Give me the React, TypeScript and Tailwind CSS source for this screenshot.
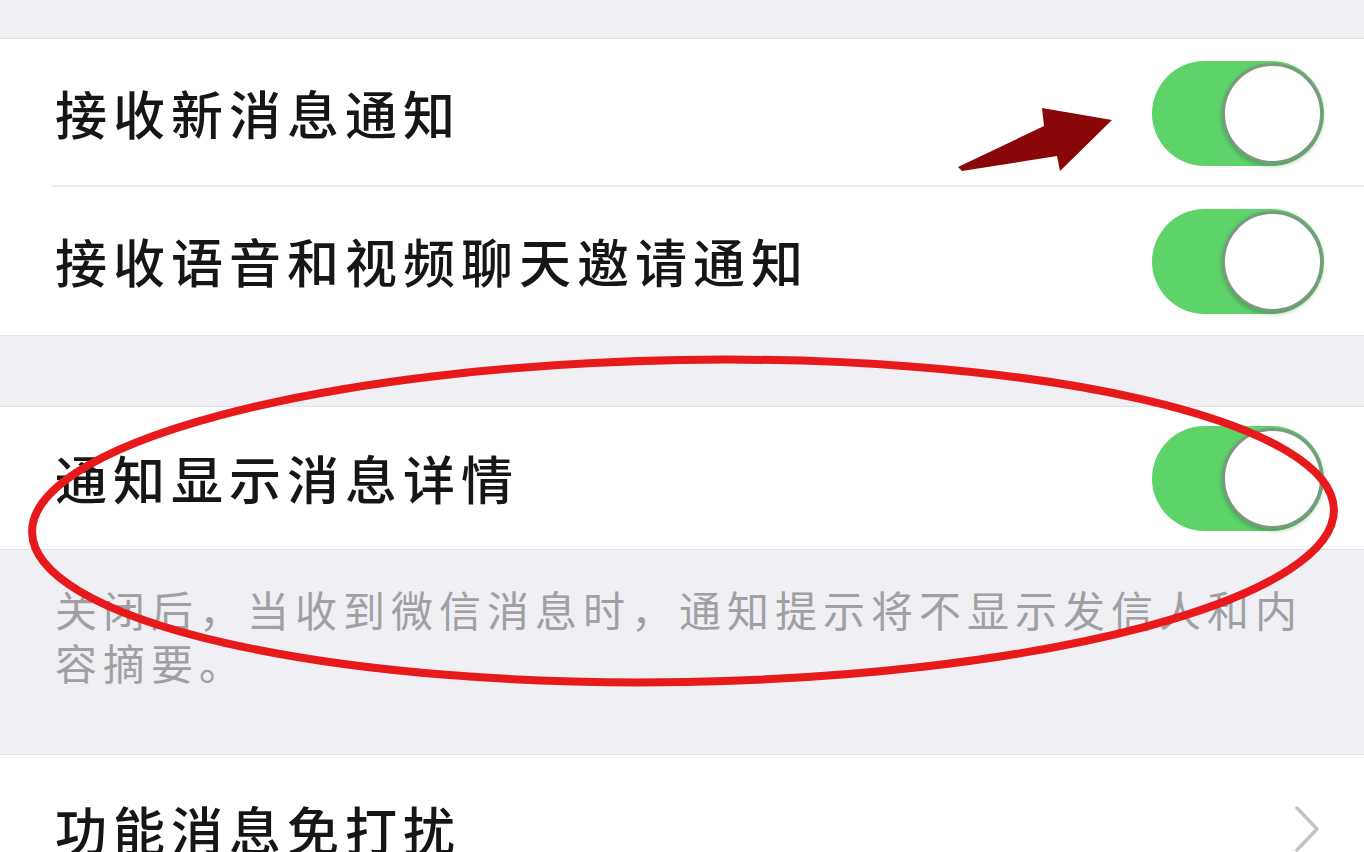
const font = { fontFamily: '"Noto Sans CJK SC", "Noto Sans", sans-serif' }

function Toggle() {
  return (
    <div className="relative h-[105px] w-[172px] shrink-0 rounded-full bg-[#5dd36a]">
      <div className="absolute right-[1px] top-[2px] h-[101px] w-[101px] rounded-full border-[3px] border-[#7a9a80] bg-white shadow-[0_2px_4px_rgba(0,0,0,0.25)]" />
    </div>
  )
}

function Chevron() {
  return (
    <svg width="30" height="48" viewBox="0 0 30 48" className="mr-[2px] shrink-0">
      <polyline points="5,3 25,24 5,45" fill="none" stroke="#c4c4c8" strokeWidth="3.5" strokeLinecap="round" strokeLinejoin="round" />
    </svg>
  )
}

function Row({ label, right, divider }: { label: string; right: React.ReactNode; divider?: boolean }) {
  return (
    <div className="relative flex h-[148px] items-center justify-between bg-white pl-[55px] pr-[40px]">
      <span className="text-[52px] font-medium leading-none tracking-[6px] text-[#161616]">{label}</span>
      {right}
      {divider && <div className="absolute bottom-0 left-[52px] right-0 h-[2px] bg-[#ececec]" />}
    </div>
  )
}

export default function App() {
  return (
    <div className="relative h-[852px] w-[1364px] overflow-hidden bg-[#efeff4]" style={font}>
      <div className="h-[38px]" />
      <div className="border-y border-[#e2e2e6]">
        <Row label="接收新消息通知" right={<Toggle />} divider />
        <Row label="接收语音和视频聊天邀请通知" right={<Toggle />} />
      </div>
      <div className="h-[70px]" />
      <div className="border-y border-[#e2e2e6]">
        <div className="flex h-[142px] items-center justify-between bg-white pl-[55px] pr-[40px]">
          <span className="text-[52px] font-medium leading-none tracking-[6px] text-[#161616]">通知显示消息详情</span>
          <Toggle />
        </div>
      </div>
      <div className="pb-[66px] pl-[55px] pr-[30px] pt-[32px] text-[42px] leading-[53px] tracking-[6px] text-[#a0a0a4]">
        关闭后，当收到微信消息时，通知提示将不显示发信人和内容摘要。
      </div>
      <div className="border-t border-[#e2e2e6]">
        <Row label="功能消息免打扰" right={<Chevron />} />
      </div>

      {/* annotations drawn on top */}
      <svg className="pointer-events-none absolute inset-0" width="1364" height="852" viewBox="0 0 1364 852">
        <polygon
          points="958,167 1044,126 1042,108 1112,120 1060,171 1057,156 962,171"
          fill="#8a0708"
        />
        <ellipse cx="683" cy="521" rx="651" ry="161" fill="none" stroke="#e8191b" strokeWidth="8" transform="rotate(-1 683 521)" />
      </svg>
    </div>
  )
}
